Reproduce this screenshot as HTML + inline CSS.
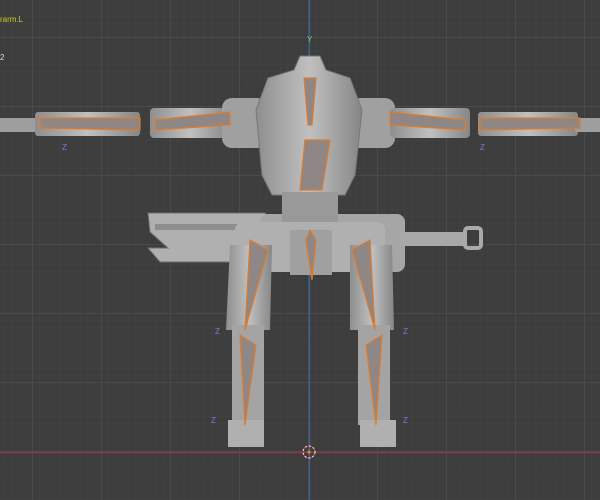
<!DOCTYPE html><html><head><style>html,body{margin:0;padding:0;background:#3d3d3d;overflow:hidden}svg{display:block}text{font-family:"Liberation Sans",sans-serif}</style></head><body>
<svg width="600" height="500" viewBox="0 0 600 500" xmlns="http://www.w3.org/2000/svg">
<defs>
<pattern id="minor" width="6.9" height="6.9" patternUnits="userSpaceOnUse" x="32" y="37"><path d="M0 0H6.9M0 0V6.9" stroke="#434343" stroke-width="1" fill="none"/></pattern>
<pattern id="major" width="69" height="69" patternUnits="userSpaceOnUse" x="32" y="37"><path d="M0 0.5H69M0.5 0V69" stroke="#4a4a4a" stroke-width="1" fill="none"/></pattern>
<linearGradient id="g" x1="0" x2="1"><stop offset="0" stop-color="#8e8e8e"/><stop offset=".5" stop-color="#c0c0c0"/><stop offset="1" stop-color="#868686"/></linearGradient>
</defs>
<rect width="600" height="500" fill="#3d3d3d"/>
<rect width="600" height="500" fill="url(#minor)"/>
<rect width="600" height="500" fill="url(#major)"/>
<line x1="0" y1="452.5" x2="600" y2="452.5" stroke="#8a3a48" stroke-width="1.5"/>
<line x1="309.5" y1="0" x2="309.5" y2="500" stroke="#3f5f8f" stroke-width="1.5"/>
<text x="0" y="22" font-size="8" fill="#d4c62a">rarm.L</text>
<text x="0" y="60" font-size="8" fill="#ddd">2</text>
<path d="M148 213 H265 L272 222 V262 H160 L148 248 H168 L150 232 Z" fill="#b0b0b0" stroke="#6e6e6e"/>
<rect x="155" y="224" width="110" height="6" fill="#8e8e8e"/>
<rect x="260" y="214" width="145" height="58" rx="8" fill="#a6a6a6"/>
<rect x="400" y="232" width="65" height="14" fill="#a8a8a8"/>
<rect x="465" y="228" width="16" height="20" rx="3" fill="none" stroke="#aaa" stroke-width="4"/>
<rect x="0" y="118" width="40" height="14" fill="#9e9e9e"/>
<rect x="35" y="112" width="105" height="24" rx="3" fill="url(#g)"/>
<rect x="150" y="108" width="80" height="30" rx="4" fill="url(#g)"/>
<rect x="222" y="98" width="45" height="50" rx="10" fill="#a0a0a0"/>
<rect x="350" y="98" width="45" height="50" rx="10" fill="#a0a0a0"/>
<rect x="390" y="108" width="80" height="30" rx="4" fill="url(#g)"/>
<rect x="478" y="112" width="100" height="24" rx="3" fill="url(#g)"/>
<rect x="575" y="118" width="25" height="14" fill="#9e9e9e"/>
<path d="M300 56 H320 L326 70 L350 78 L362 110 L355 175 L345 195 H272 L262 175 L256 110 L268 78 L294 70 Z" fill="url(#g)" stroke="#777"/>
<rect x="282" y="192" width="56" height="32" fill="#999"/>
<rect x="235" y="222" width="150" height="50" rx="8" fill="#b0b0b0"/>
<rect x="290" y="230" width="42" height="45" fill="#a0a0a0"/>
<path d="M230 245 H272 L270 330 H226 Z" fill="url(#g)"/>
<path d="M350 245 H392 L394 330 H350 Z" fill="url(#g)"/>
<rect x="232" y="325" width="32" height="100" fill="#a4a4a4"/>
<rect x="358" y="325" width="32" height="100" fill="#a4a4a4"/>
<rect x="228" y="420" width="36" height="27" fill="#b0b0b0"/>
<rect x="360" y="420" width="36" height="27" fill="#b0b0b0"/>
<g fill="#8f8785" stroke="#e07b2a" stroke-width="1.2">
<path d="M300 190 L322 190 L330 140 L305 140 Z"/>
<path d="M304 78 L316 78 L312 125 L308 125 Z"/>
<path d="M250 240 L268 250 L245 330 Z"/>
<path d="M370 240 L352 250 L375 330 Z"/>
<path d="M240 335 L256 345 L245 425 Z"/>
<path d="M382 335 L366 345 L376 425 Z"/>
<path d="M155 120 L230 112 L230 125 L155 130 Z"/>
<path d="M465 120 L390 112 L390 125 L465 130 Z"/>
<path d="M40 118 L140 118 L140 130 L40 128 Z"/>
<path d="M480 118 L580 118 L580 128 L480 130 Z"/>
<path d="M310 230 L316 240 L312 280 L306 240 Z"/>
</g>
<g fill="#7a7ae0" font-size="8">
<text x="215" y="334">Z</text><text x="403" y="334">Z</text>
<text x="211" y="423">Z</text><text x="403" y="423">Z</text>
<text x="62" y="150">Z</text><text x="480" y="150">Z</text>
</g>
<text x="307" y="42" font-size="8" fill="#6fd06f">Y</text>
<circle cx="309" cy="452" r="6" fill="none" stroke="#fff" stroke-dasharray="2 2"/>
<circle cx="309" cy="452" r="6" fill="none" stroke="#d33" stroke-dasharray="2 2" stroke-dashoffset="2"/>
<circle cx="309" cy="452" r="1.5" fill="#f80"/>
</svg></body></html>
